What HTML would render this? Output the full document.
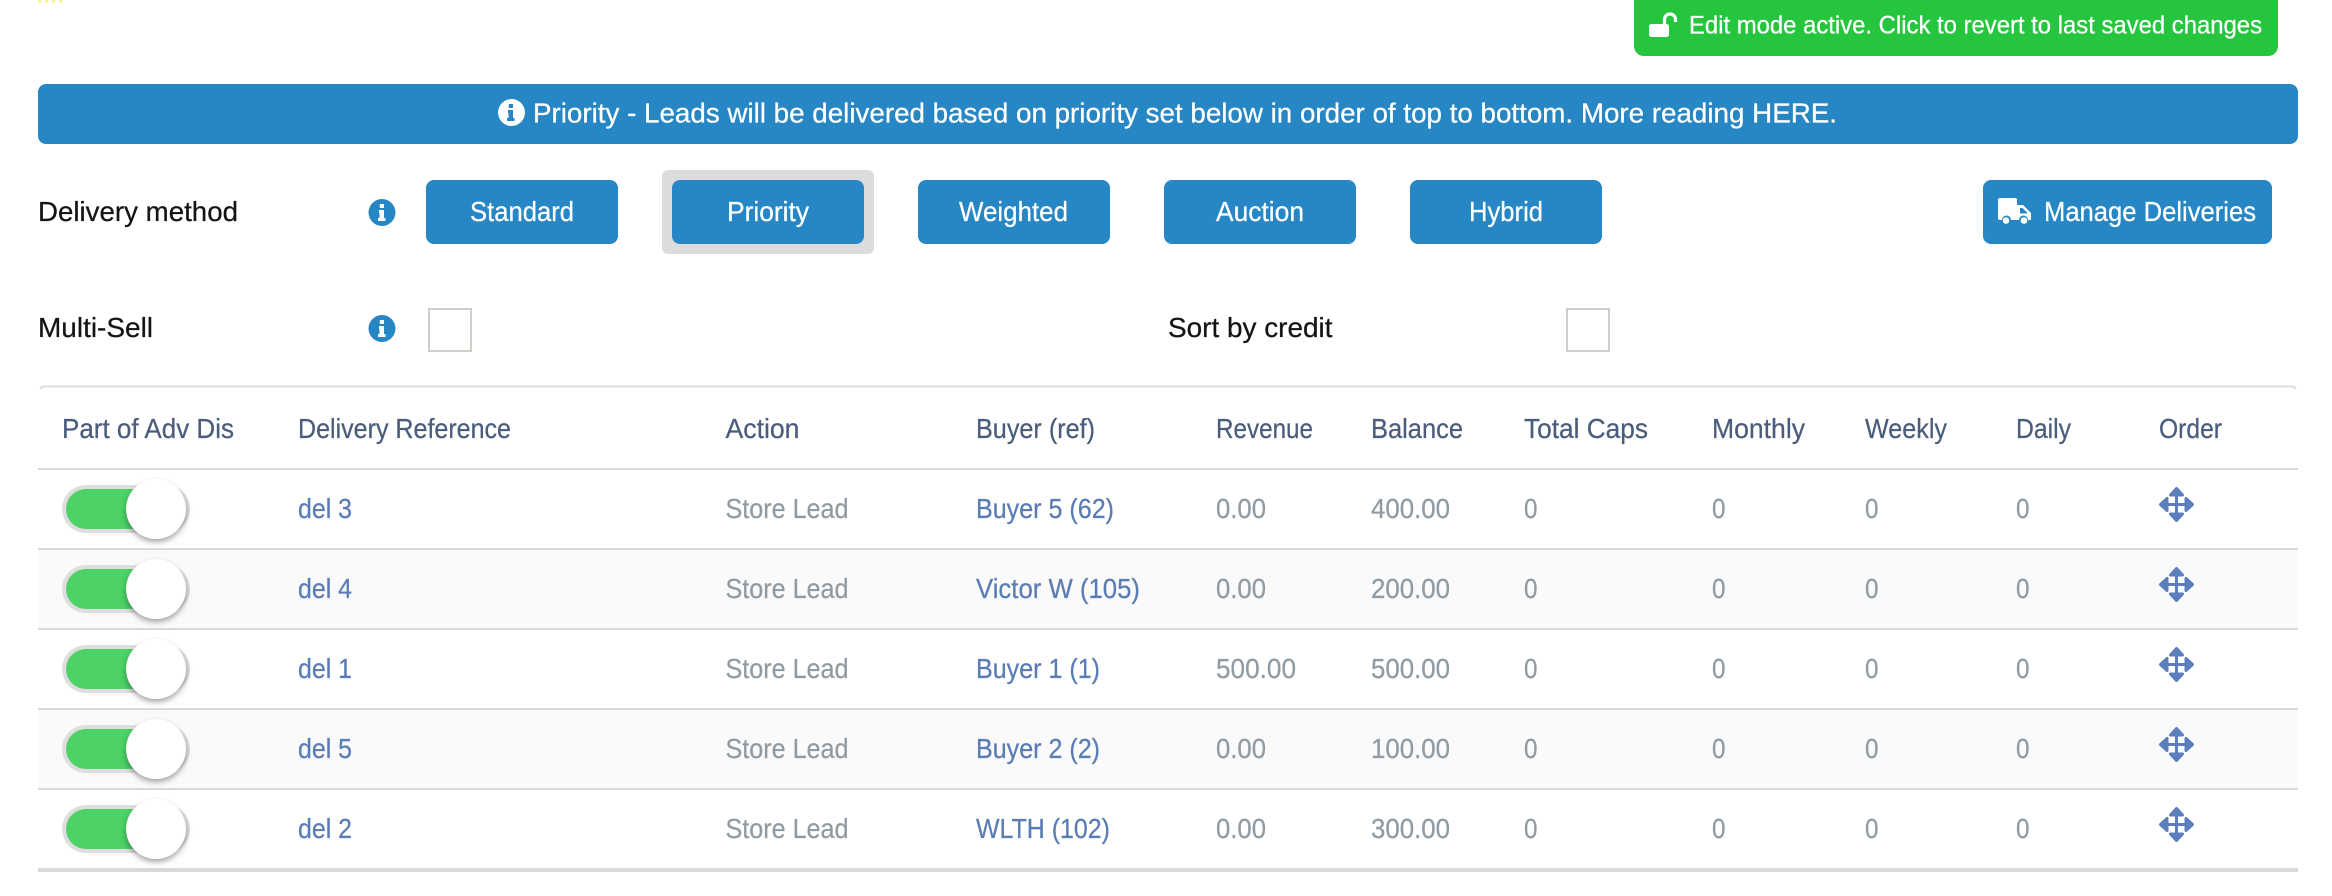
<!DOCTYPE html>
<html><head><meta charset="utf-8"><title>Delivery method</title>
<style>
html,body{margin:0;padding:0;background:#fff;width:2332px;height:896px;overflow:hidden}
svg{display:block}
text{font-family:"Liberation Sans",sans-serif;font-size:27.5px;stroke-width:.25px}
.w{fill:#fff;stroke:#fff}.k{fill:#141414;stroke:#141414}.h{fill:#4a5d7c;stroke:#4a5d7c}.l{fill:#5a7cb4;stroke:#5a7cb4}.m{fill:#8f9ba4;stroke:#8f9ba4}
</style></head><body>
<svg width="2332" height="896" viewBox="0 0 2332 896" xmlns="http://www.w3.org/2000/svg">
<defs>
<g id="info"><circle r="13.5" fill="#2787c5"/><path d="M-3 -2.500h5v8h1.500v3h-7.500v-3h1.500v-5h-.5zM-2.200 -8.500h4.200v4h-4.200z" fill="#fff"/></g>
<g id="tog"><rect x="62" y="485" width="128" height="48" rx="24" fill="#dedede"/><rect x="66" y="489" width="120" height="40" rx="20" fill="#4cd265"/><circle cx="156" cy="509" r="30" fill="#fff" style="filter:drop-shadow(0 3px 3px rgba(0,0,0,.35))"/></g>
<g id="mv" fill="#5a7fbc" stroke="#5a7fbc" stroke-linejoin="round">
<path d="M-13 0H13M0 -13V13" stroke-width="3" fill="none"/>
<path d="M0 -16L-6 -9.500H6ZM0 16L-6 9.500H6ZM-16 0L-9.500 -6V6ZM16 0L9.500 -6V6Z" stroke-width="3"/></g>
</defs>

<path d="M38 1.500H62" stroke="#f1f26c" stroke-width="3" stroke-dasharray="3 4" opacity=".7"/>

<!-- Edit mode button -->
<path d="M1634 0H2278V46a10 10 0 0 1-10 10H1644a10 10 0 0 1-10-10Z" fill="#25c63e"/>
<rect x="1649" y="24" width="20" height="13" rx="2.500" fill="#fff"/>
<path d="M1664.500 25V19.500a5.500 5.500 0 0 1 11 0V22" fill="none" stroke="#fff" stroke-width="3.200"/>
<text class="w" x="1689" y="33.500" style="font-size:25px" textLength="573" lengthAdjust="spacingAndGlyphs">Edit mode active. Click to revert to last saved changes</text>

<!-- Banner -->
<rect x="38" y="84" width="2260" height="60" rx="8" fill="#2787c5"/>
<circle cx="511.500" cy="112.500" r="13.500" fill="#fff"/>
<path d="M508 110h5v8h1.500v3H507v-3h1.500v-5H508zM508.800 104h4.200v4h-4.200z" fill="#2787c5"/>
<text class="w" x="533" y="122.500" textLength="1304" lengthAdjust="spacingAndGlyphs">Priority - Leads will be delivered based on priority set below in order of top to bottom. More reading HERE.</text>

<!-- Delivery method row -->
<text class="k" x="38" y="221" textLength="200" lengthAdjust="spacingAndGlyphs">Delivery method</text>
<use href="#info" x="382" y="212.500"/>
<rect x="426" y="180" width="192" height="64" rx="8" fill="#2787c5"/>
<text class="w" x="470" y="221" textLength="104" lengthAdjust="spacingAndGlyphs">Standard</text>
<rect x="662" y="170" width="212" height="84" rx="6" fill="#dcdcdc"/>
<rect x="672" y="180" width="192" height="64" rx="8" fill="#2787c5"/>
<text class="w" x="727" y="221" textLength="82" lengthAdjust="spacingAndGlyphs">Priority</text>
<rect x="918" y="180" width="192" height="64" rx="8" fill="#2787c5"/>
<text class="w" x="959" y="221" textLength="109" lengthAdjust="spacingAndGlyphs">Weighted</text>
<rect x="1164" y="180" width="192" height="64" rx="8" fill="#2787c5"/>
<text class="w" x="1216" y="221" textLength="88" lengthAdjust="spacingAndGlyphs">Auction</text>
<rect x="1410" y="180" width="192" height="64" rx="8" fill="#2787c5"/>
<text class="w" x="1469" y="221" textLength="74" lengthAdjust="spacingAndGlyphs">Hybrid</text>
<rect x="1983" y="180" width="289" height="64" rx="8" fill="#2787c5"/>
<path d="M2000 198h15a2 2 0 0 1 2 2v5h6l8 8v7h-3a4.500 4.500 0 0 0-9 0h-8a4.500 4.500 0 0 0-9 0h-2a2 2 0 0 1-2-2v-18a2 2 0 0 1 2-2z" fill="#fff"/>
<path d="M2020 208h2.500l4.500 4.500v1h-7z" fill="#2787c5"/>
<circle cx="2006" cy="220.500" r="3.300" fill="#fff"/><circle cx="2024" cy="220.500" r="3.300" fill="#fff"/>
<text class="w" x="2044" y="221" textLength="212" lengthAdjust="spacingAndGlyphs">Manage Deliveries</text>

<!-- Multi-sell row -->
<text class="k" x="38" y="337" textLength="115" lengthAdjust="spacingAndGlyphs">Multi-Sell</text>
<use href="#info" x="382" y="328.500"/>
<rect x="429" y="309" width="42" height="42" fill="#fff" stroke="#cfcfca" stroke-width="2"/>
<text class="k" x="1168" y="337" textLength="164.500" lengthAdjust="spacingAndGlyphs">Sort by credit</text>
<rect x="1567" y="309" width="42" height="42" fill="#fff" stroke="#cfcfca" stroke-width="2"/>

<!-- Table frame -->
<path d="M40 389a5 5 0 0 1 5-2.500H2291a5 5 0 0 1 5 2.500" fill="none" stroke="#dcdcdc" stroke-width="2"/>
<rect x="38" y="550" width="2260" height="78" fill="#fafafa"/>
<rect x="38" y="710" width="2260" height="78" fill="#fafafa"/>
<rect x="38" y="468" width="2260" height="2" fill="#d9d9d9"/>
<rect x="38" y="548" width="2260" height="2" fill="#d9d9d9"/>
<rect x="38" y="628" width="2260" height="2" fill="#d9d9d9"/>
<rect x="38" y="708" width="2260" height="2" fill="#d9d9d9"/>
<rect x="38" y="788" width="2260" height="2" fill="#d9d9d9"/>
<rect x="38" y="868" width="2260" height="4" fill="#d9d9d9"/>

<!-- Header -->
<text class="h" x="62" y="438" textLength="172" lengthAdjust="spacingAndGlyphs">Part of Adv Dis</text>
<text class="h" x="298" y="438" textLength="213" lengthAdjust="spacingAndGlyphs">Delivery Reference</text>
<text class="h" x="725.500" y="438" textLength="74" lengthAdjust="spacingAndGlyphs">Action</text>
<text class="h" x="976" y="438" textLength="119" lengthAdjust="spacingAndGlyphs">Buyer (ref)</text>
<text class="h" x="1216" y="438" textLength="97" lengthAdjust="spacingAndGlyphs">Revenue</text>
<text class="h" x="1371" y="438" textLength="92" lengthAdjust="spacingAndGlyphs">Balance</text>
<text class="h" x="1524" y="438" textLength="124" lengthAdjust="spacingAndGlyphs">Total Caps</text>
<text class="h" x="1712" y="438" textLength="93" lengthAdjust="spacingAndGlyphs">Monthly</text>
<text class="h" x="1865" y="438" textLength="82" lengthAdjust="spacingAndGlyphs">Weekly</text>
<text class="h" x="2016" y="438" textLength="55" lengthAdjust="spacingAndGlyphs">Daily</text>
<text class="h" x="2159" y="438" textLength="63" lengthAdjust="spacingAndGlyphs">Order</text>

<!-- Row 1 -->
<use href="#tog"/>
<text class="l" x="298" y="518" textLength="54" lengthAdjust="spacingAndGlyphs">del 3</text>
<text class="m" x="725.500" y="518" textLength="123" lengthAdjust="spacingAndGlyphs">Store Lead</text>
<text class="l" x="976" y="518" textLength="138" lengthAdjust="spacingAndGlyphs">Buyer 5 (62)</text>
<text class="m" x="1216" y="518" textLength="50" lengthAdjust="spacingAndGlyphs">0.00</text>
<text class="m" x="1371" y="518" textLength="79" lengthAdjust="spacingAndGlyphs">400.00</text>
<text class="m" x="1524" y="518" textLength="13.500" lengthAdjust="spacingAndGlyphs">0</text><text class="m" x="1712" y="518" textLength="13.500" lengthAdjust="spacingAndGlyphs">0</text><text class="m" x="1865" y="518" textLength="13.500" lengthAdjust="spacingAndGlyphs">0</text><text class="m" x="2016" y="518" textLength="13.500" lengthAdjust="spacingAndGlyphs">0</text>
<use href="#mv" x="2176.500" y="504.500"/>

<!-- Row 2 -->
<use href="#tog" y="80"/>
<text class="l" x="298" y="598" textLength="54" lengthAdjust="spacingAndGlyphs">del 4</text>
<text class="m" x="725.500" y="598" textLength="123" lengthAdjust="spacingAndGlyphs">Store Lead</text>
<text class="l" x="976" y="598" textLength="164" lengthAdjust="spacingAndGlyphs">Victor W (105)</text>
<text class="m" x="1216" y="598" textLength="50" lengthAdjust="spacingAndGlyphs">0.00</text>
<text class="m" x="1371" y="598" textLength="79" lengthAdjust="spacingAndGlyphs">200.00</text>
<text class="m" x="1524" y="598" textLength="13.500" lengthAdjust="spacingAndGlyphs">0</text><text class="m" x="1712" y="598" textLength="13.500" lengthAdjust="spacingAndGlyphs">0</text><text class="m" x="1865" y="598" textLength="13.500" lengthAdjust="spacingAndGlyphs">0</text><text class="m" x="2016" y="598" textLength="13.500" lengthAdjust="spacingAndGlyphs">0</text>
<use href="#mv" x="2176.500" y="584.500"/>

<!-- Row 3 -->
<use href="#tog" y="160"/>
<text class="l" x="298" y="678" textLength="54" lengthAdjust="spacingAndGlyphs">del 1</text>
<text class="m" x="725.500" y="678" textLength="123" lengthAdjust="spacingAndGlyphs">Store Lead</text>
<text class="l" x="976" y="678" textLength="124" lengthAdjust="spacingAndGlyphs">Buyer 1 (1)</text>
<text class="m" x="1216" y="678" textLength="80" lengthAdjust="spacingAndGlyphs">500.00</text>
<text class="m" x="1371" y="678" textLength="79" lengthAdjust="spacingAndGlyphs">500.00</text>
<text class="m" x="1524" y="678" textLength="13.500" lengthAdjust="spacingAndGlyphs">0</text><text class="m" x="1712" y="678" textLength="13.500" lengthAdjust="spacingAndGlyphs">0</text><text class="m" x="1865" y="678" textLength="13.500" lengthAdjust="spacingAndGlyphs">0</text><text class="m" x="2016" y="678" textLength="13.500" lengthAdjust="spacingAndGlyphs">0</text>
<use href="#mv" x="2176.500" y="664.500"/>

<!-- Row 4 -->
<use href="#tog" y="240"/>
<text class="l" x="298" y="758" textLength="54" lengthAdjust="spacingAndGlyphs">del 5</text>
<text class="m" x="725.500" y="758" textLength="123" lengthAdjust="spacingAndGlyphs">Store Lead</text>
<text class="l" x="976" y="758" textLength="124" lengthAdjust="spacingAndGlyphs">Buyer 2 (2)</text>
<text class="m" x="1216" y="758" textLength="50" lengthAdjust="spacingAndGlyphs">0.00</text>
<text class="m" x="1371" y="758" textLength="79" lengthAdjust="spacingAndGlyphs">100.00</text>
<text class="m" x="1524" y="758" textLength="13.500" lengthAdjust="spacingAndGlyphs">0</text><text class="m" x="1712" y="758" textLength="13.500" lengthAdjust="spacingAndGlyphs">0</text><text class="m" x="1865" y="758" textLength="13.500" lengthAdjust="spacingAndGlyphs">0</text><text class="m" x="2016" y="758" textLength="13.500" lengthAdjust="spacingAndGlyphs">0</text>
<use href="#mv" x="2176.500" y="744.500"/>

<!-- Row 5 -->
<use href="#tog" y="320"/>
<text class="l" x="298" y="838" textLength="54" lengthAdjust="spacingAndGlyphs">del 2</text>
<text class="m" x="725.500" y="838" textLength="123" lengthAdjust="spacingAndGlyphs">Store Lead</text>
<text class="l" x="976" y="838" textLength="134" lengthAdjust="spacingAndGlyphs">WLTH (102)</text>
<text class="m" x="1216" y="838" textLength="50" lengthAdjust="spacingAndGlyphs">0.00</text>
<text class="m" x="1371" y="838" textLength="79" lengthAdjust="spacingAndGlyphs">300.00</text>
<text class="m" x="1524" y="838" textLength="13.500" lengthAdjust="spacingAndGlyphs">0</text><text class="m" x="1712" y="838" textLength="13.500" lengthAdjust="spacingAndGlyphs">0</text><text class="m" x="1865" y="838" textLength="13.500" lengthAdjust="spacingAndGlyphs">0</text><text class="m" x="2016" y="838" textLength="13.500" lengthAdjust="spacingAndGlyphs">0</text>
<use href="#mv" x="2176.500" y="824.500"/>
</svg>
</body></html>
